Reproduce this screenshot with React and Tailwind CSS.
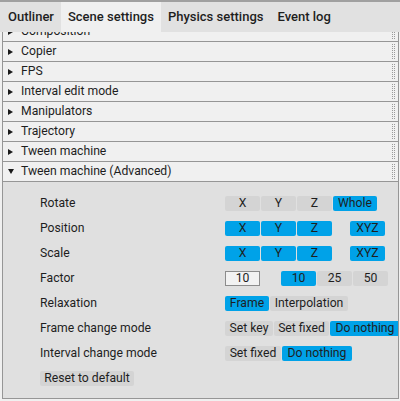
import React from "react";

const headers = [
  "Composition",
  "Copier",
  "FPS",
  "Interval edit mode",
  "Manipulators",
  "Trajectory",
  "Tween machine",
];

function Grip() {
  return (
    <svg width="3" height="16" className="ml-auto mr-[3px] shrink-0">
      {[0, 2, 4, 6, 8, 10, 12, 14].map((y) => (
        <g key={y} fill="#9a9a9a">
          <rect x="0" y={y} width="1" height="1" />
          <rect x="2" y={y} width="1" height="1" />
        </g>
      ))}
    </svg>
  );
}

function Arrow({ open }) {
  return open ? (
    <svg width="6" height="5" className="shrink-0">
      <polygon points="0,0 6,0 3,5" fill="#1a1a1a" />
    </svg>
  ) : (
    <svg width="5" height="6" className="shrink-0">
      <polygon points="0,0 5,3 0,6" fill="#1a1a1a" />
    </svg>
  );
}

function Header({ title, open }) {
  return (
    <div className="h-[20px] flex items-center border-b border-[#969696] bg-[#f0f0f0] pl-[5px] shrink-0">
      <div className="w-[13px] flex items-center">
        <Arrow open={open} />
      </div>
      <span className="text-[12.2px] text-[#1e1e1e] leading-[19px]">{title}</span>
      <Grip />
    </div>
  );
}

function Btn({ children, on, w }) {
  return (
    <div
      className={`h-[15px] ${w} shrink-0 rounded-[2px] text-center text-[12.2px] leading-[15px] text-[#1e1e1e] ${
        on ? "bg-[#00a2e8]" : "bg-[#d4d4d4]"
      }`}
    >
      {children}
    </div>
  );
}

function Row({ label, children }) {
  return (
    <div className="flex items-center h-[15px]">
      <div className="w-[222px] pl-[37px] text-[12.2px] leading-[15px] text-[#1e1e1e] shrink-0">{label}</div>
      <div className="flex items-center gap-[1px]">{children}</div>
    </div>
  );
}

export default function App() {
  const tabs = ["Outliner", "Scene settings", "Physics settings", "Event log"];
  return (
    <div className="w-[400px] h-[401px] bg-[#f0f0f0] overflow-hidden" style={{ fontFamily: "Roboto, 'Noto Sans', sans-serif" }}>
      <div className="h-[2px] bg-[#a0a0a0]" />
      <div className="h-[30px] bg-[#e1e1e1] flex pl-[1px]">
        {tabs.map((t, i) => (
          <div
            key={t}
            className={`px-[7px] flex items-center text-[13px] font-medium text-[#1e1e1e] ${
              i === 1 ? "bg-[#f0f0f0]" : ""
            }`}
          >
            {t}
          </div>
        ))}
      </div>
      <div className="ml-[2px] w-[397px] h-[367px] border-l border-r border-b border-[#969696] overflow-hidden flex flex-col">
        <div className="-mt-[10px] flex flex-col">
          {headers.map((h) => (
            <Header key={h} title={h} />
          ))}
          <Header title="Tween machine (Advanced)" open />
        </div>
        <div className="flex-1 bg-[#e0e0e0] pt-[14px] flex flex-col gap-[10px]">
          <Row label="Rotate">
            <Btn w="w-[35px]">X</Btn>
            <Btn w="w-[35px]">Y</Btn>
            <Btn w="w-[35px]">Z</Btn>
            <Btn w="w-[44px]" on>Whole</Btn>
          </Row>
          <Row label="Position">
            <Btn w="w-[35px]" on>X</Btn>
            <Btn w="w-[35px]" on>Y</Btn>
            <Btn w="w-[35px]" on>Z</Btn>
            <div className="w-[16px]" />
            <Btn w="w-[35px]" on>XYZ</Btn>
          </Row>
          <Row label="Scale">
            <Btn w="w-[35px]" on>X</Btn>
            <Btn w="w-[35px]" on>Y</Btn>
            <Btn w="w-[35px]" on>Z</Btn>
            <div className="w-[16px]" />
            <Btn w="w-[35px]" on>XYZ</Btn>
          </Row>
          <Row label="Factor">
            <div className="h-[15px] w-[35px] border border-[#8c8c8c] bg-[#f2f2f2] text-center text-[12.2px] leading-[13px] text-[#1e1e1e]">
              10
            </div>
            <div className="w-[19px]" />
            <Btn w="w-[35px]" on>10</Btn>
            <Btn w="w-[35px]">25</Btn>
            <Btn w="w-[35px]">50</Btn>
          </Row>
          <Row label="Relaxation">
            <Btn w="w-[44px]" on>Frame</Btn>
            <Btn w="w-[78px]">Interpolation</Btn>
          </Row>
          <Row label="Frame change mode">
            <Btn w="w-[48px]">Set key</Btn>
            <Btn w="w-[55px]">Set fixed</Btn>
            <Btn w="w-[70px]" on>Do nothing</Btn>
          </Row>
          <Row label="Interval change mode">
            <Btn w="w-[56px]">Set fixed</Btn>
            <Btn w="w-[70px]" on>Do nothing</Btn>
          </Row>
          <div className="pl-[37px]">
            <Btn w="w-[94px]">Reset to default</Btn>
          </div>
        </div>
      </div>
    </div>
  );
}
